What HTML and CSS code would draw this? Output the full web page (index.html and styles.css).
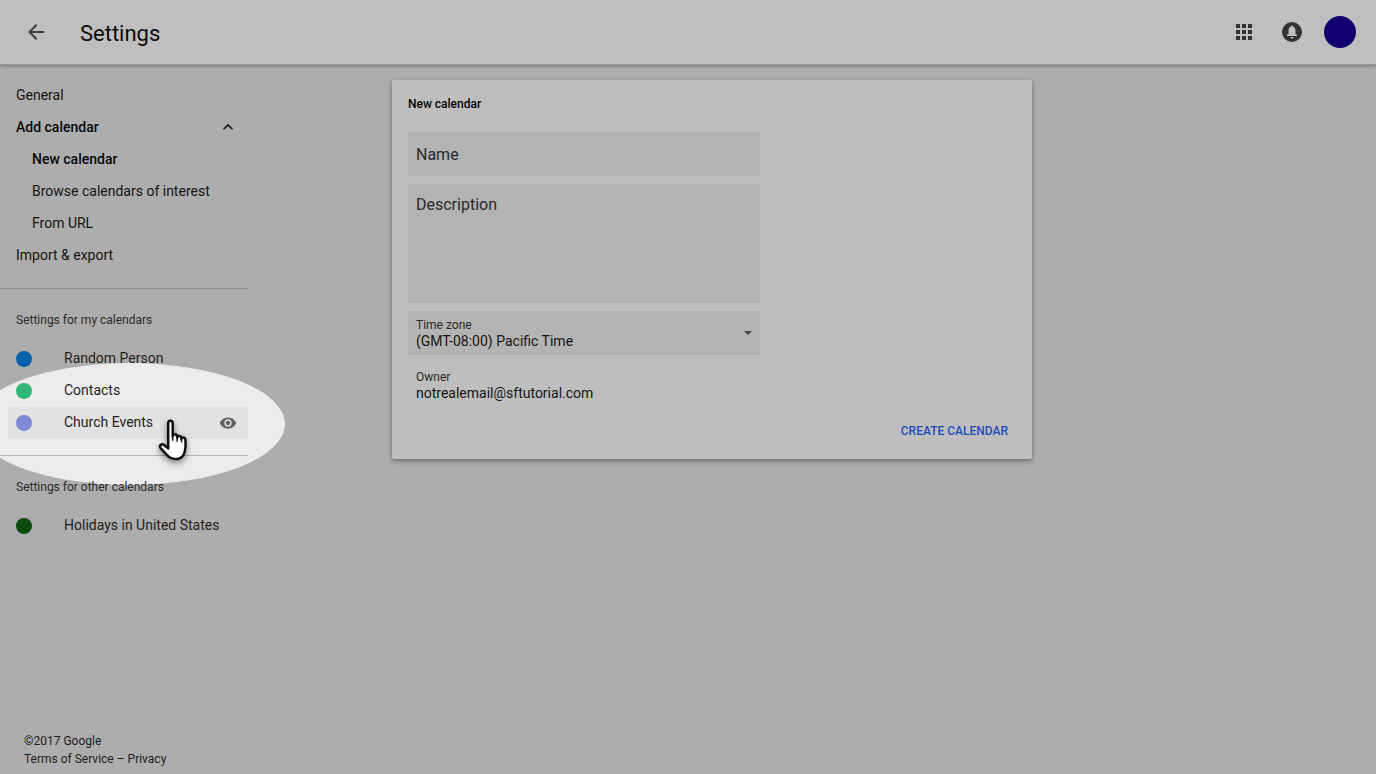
FILE: index.html
```html
<!DOCTYPE html>
<html lang="en">
<head>
<meta charset="utf-8">
<title>Settings</title>
<link rel="stylesheet" href="styles.css">
</head>
<body>
<div class="page">
  <div class="spot"></div>
  <header class="topbar">
    <svg class="back" viewBox="0 0 24 24" width="24" height="24"><path d="M20 11H7.830l5.590-5.590L12 4l-8 8 8 8 1.410-1.410L7.830 13H20v-2z"/></svg>
    <h1 class="title">Settings</h1>
    <div class="top-actions">
      <svg class="icon" viewBox="0 0 24 24" width="24" height="24"><path d="M4 8h4V4H4v4zm6 12h4v-4h-4v4zm-6 0h4v-4H4v4zm0-6h4v-4H4v4zm6 0h4v-4h-4v4zm6-10v4h4V4h-4zm-6 4h4V4h-4v4zm6 6h4v-4h-4v4zm0 6h4v-4h-4v4z"/></svg>
      <svg class="icon" viewBox="0 0 24 24" width="24" height="24"><path fill-rule="evenodd" d="M12 2a10 10 0 1 0 0 20 10 10 0 0 0 0-20zm0 16.500c-.830 0-1.500-.670-1.500-1.500h3c0 .830-.670 1.500-1.500 1.500zm5-2.500H7v-1l1.500-1.500v-3.300C8.500 8.600 9.600 7 11.300 6.600V6a.7.7 0 0 1 1.400 0v.6c1.700.4 2.800 2 2.800 4.100v3.300L17 15v1z"/></svg>
      <div class="avatar"></div>
    </div>
  </header>
  <div class="content">
    <nav class="sidebar">
      <ul class="menu">
        <li class="item">General</li>
        <li class="item strong">Add calendar
          <svg class="chev" viewBox="0 0 24 24" width="20" height="20"><path d="M12 8l-6 6 1.410 1.410L12 10.830l4.590 4.580L18 14z"/></svg>
        </li>
        <li class="item sub strong">New calendar</li>
        <li class="item sub">Browse calendars of interest</li>
        <li class="item sub">From URL</li>
        <li class="item">Import &amp; export</li>
      </ul>
      <div class="rule first"></div>
      <div class="group-label">Settings for my calendars</div>
      <ul class="cals">
        <li class="cal"><span class="dot blue"></span><span class="cal-name">Random Person</span></li>
        <li class="cal"><span class="dot green"></span><span class="cal-name">Contacts</span></li>
        <li class="cal hover"><span class="dot lav"></span><span class="cal-name">Church Events</span>
          <svg class="eye" viewBox="0 0 24 24" width="18" height="18"><path d="M12 4.500C7 4.500 2.730 7.610 1 12c1.730 4.390 6 7.500 11 7.500s9.270-3.110 11-7.500c-1.730-4.390-6-7.500-11-7.500zM12 17c-2.760 0-5-2.240-5-5s2.240-5 5-5 5 2.240 5 5-2.240 5-5 5zm0-8c-1.660 0-3 1.340-3 3s1.340 3 3 3 3-1.340 3-3-1.340-3-3-3z"/></svg>
        </li>
      </ul>
      <div class="rule second"></div>
      <div class="group-label">Settings for other calendars</div>
      <ul class="cals">
        <li class="cal"><span class="dot dark"></span><span class="cal-name">Holidays in United States</span></li>
      </ul>
      <footer class="foot">
        <div>©2017 Google</div>
        <div>Terms of Service – Privacy</div>
      </footer>
    </nav>
    <main class="main">
      <section class="card">
        <h2 class="card-title">New calendar</h2>
        <div class="field name">Name</div>
        <div class="field desc">Description</div>
        <div class="field tz">
          <div class="mini">Time zone</div>
          <div class="val">(GMT-08:00) Pacific Time</div>
          <span class="caret"></span>
        </div>
        <div class="owner">
          <div class="mini">Owner</div>
          <div class="val">notrealemail@sftutorial.com</div>
        </div>
        <div class="actions"><span class="create">CREATE CALENDAR</span></div>
      </section>
    </main>
  </div>
  <svg class="hand" viewBox="0 0 34 44" width="40" height="50">
    <path d="M11 4.500c0-2.800 4-2.800 4 0V16c.3-2.400 3.700-2.200 3.800.2l.1 1c.4-2.100 3.500-1.900 3.700.3l.1 1c.5-1.900 3.300-1.600 3.500.5.300 3.500.1 7.500-.6 10.500-.8 3.500-2.800 6-6.600 6.500-3.800.4-6.700-.7-9-3.400L4.300 26.500c-1.600-2.100.9-4.300 3-2.800l3.700 3z" fill="#fff" stroke="#111" stroke-width="2.200" stroke-linejoin="round"/>
    <path d="M15 14v6M18.900 17v4M22.700 18.500v3" fill="none" stroke="#111" stroke-width="1.300"/>
  </svg>
</div>
</body>
</html>
```
FILE: styles.css
```css
* { box-sizing: border-box; }
html, body { margin: 0; height: 100%; }
body {
  font-family: Roboto, "Liberation Sans", sans-serif;
  color: #111;
  overflow: hidden;
}
.page {
  position: relative;
  width: 1376px;
  height: 774px;
  overflow: hidden;
  background: #adadad;
  display: flex;
  flex-direction: column;
}
.spot {
  position: absolute;
  left: -26px;
  top: 363px;
  width: 311px;
  height: 122px;
  border-radius: 50%;
  background: #ececec;
}
.topbar {
  position: relative;
  flex: 0 0 65px;
  height: 65px;
  display: flex;
  align-items: center;
  padding: 0 20px 0 24px;
  background: #bfbfbf;
  box-shadow: 0 1px 3px rgba(0,0,0,.35);
  border-bottom: 1px solid #9c9c9c;
}
.back { fill: #3c3c3c; }
.title {
  margin: 2px 0 0 32px;
  font-size: 22px;
  font-weight: 400;
  color: #0c0c0c;
}
.top-actions {
  margin-left: auto;
  display: flex;
  align-items: center;
  gap: 24px;
}
.icon { fill: #333; display: block; }
.avatar {
  width: 32px;
  height: 32px;
  margin-left: -4px;
  border-radius: 50%;
  background: #120070;
}
.content {
  position: relative;
  flex: 1;
  display: flex;
  min-height: 0;
}
.sidebar {
  width: 248px;
  padding-top: 14px;
  display: flex;
  flex-direction: column;
  font-size: 14px;
}
ul { list-style: none; margin: 0; padding: 0; }
.item {
  height: 32px;
  line-height: 32px;
  padding-left: 16px;
  position: relative;
  display: flex;
  align-items: center;
  justify-content: space-between;
  padding-right: 10px;
  color: #141414;
}
.item.sub { padding-left: 32px; }
.strong { font-weight: 500; color: #080808; }
.chev { fill: #1a1a1a; }
.rule { height: 1px; background: #8f8f8f; }
.rule.first { margin-top: 17px; }
.rule.second { margin-top: 16px; background: #b5b5b5; }
.group-label {
  height: 12px;
  margin: 25px 0 17px 16px;
  font-size: 12px;
  line-height: 12px;
  color: #2a2a2a;
}
.cal {
  height: 32px;
  margin-left: 8px;
  padding-left: 8px;
  display: flex;
  align-items: center;
  color: #1f1f1f;
  position: relative;
}
.cal.hover { background: #e2e2e2; }
.cal-name { margin-bottom: 2px; }
.dot {
  width: 16px;
  height: 16px;
  border-radius: 50%;
  margin-right: 32px;
}
.blue { background: #0a62ad; }
.green { background: #33b679; }
.lav { background: #7f8bd4; }
.dark { background: #0a4a0a; }
.eye { fill: #606060; position: absolute; right: 11px; top: 7px; }
.foot {
  margin-top: auto;
  padding: 0 0 6px 24px;
  font-size: 12px;
  line-height: 18px;
  color: #1e1e1e;
}
.main { flex: 1; padding: 15px 0 0 144px; }
.card {
  width: 640px;
  height: 379px;
  padding: 16px;
  background: #bebebe;
  border-radius: 2px;
  box-shadow: 0 2px 5px rgba(0,0,0,.4);
}
.card-title {
  margin: 0 0 20px;
  font-size: 12px;
  line-height: 16px;
  font-weight: 500;
  color: #050505;
}
.field {
  width: 352px;
  background: #b3b3b3;
  padding-left: 8px;
  color: #2a2a2a;
  position: relative;
}
.name { height: 44px; line-height: 46px; font-size: 16px; margin-bottom: 8px; }
.desc { height: 119px; font-size: 16px; line-height: 20px; padding-top: 11px; margin-bottom: 8px; }
.tz { height: 44px; padding-top: 6px; }
.mini { font-size: 12px; line-height: 16px; color: #2a2a2a; }
.val { font-size: 14px; line-height: 16px; color: #141414; }
.caret {
  position: absolute;
  right: 8px;
  top: 20px;
  width: 0; height: 0;
  border-left: 4px solid transparent;
  border-right: 4px solid transparent;
  border-top: 4px solid #444;
}
.owner { padding: 14px 0 0 8px; }
.actions {
  margin-top: 22px;
  display: flex;
  justify-content: flex-end;
  padding-right: 8px;
}
.create { font-size: 12px; line-height: 16px; font-weight: 500; color: #1a4cc0; }
.hand {
  position: absolute;
  left: 155px;
  top: 418px;
  filter: drop-shadow(0 3px 3px rgba(0,0,0,.45));
}
```
